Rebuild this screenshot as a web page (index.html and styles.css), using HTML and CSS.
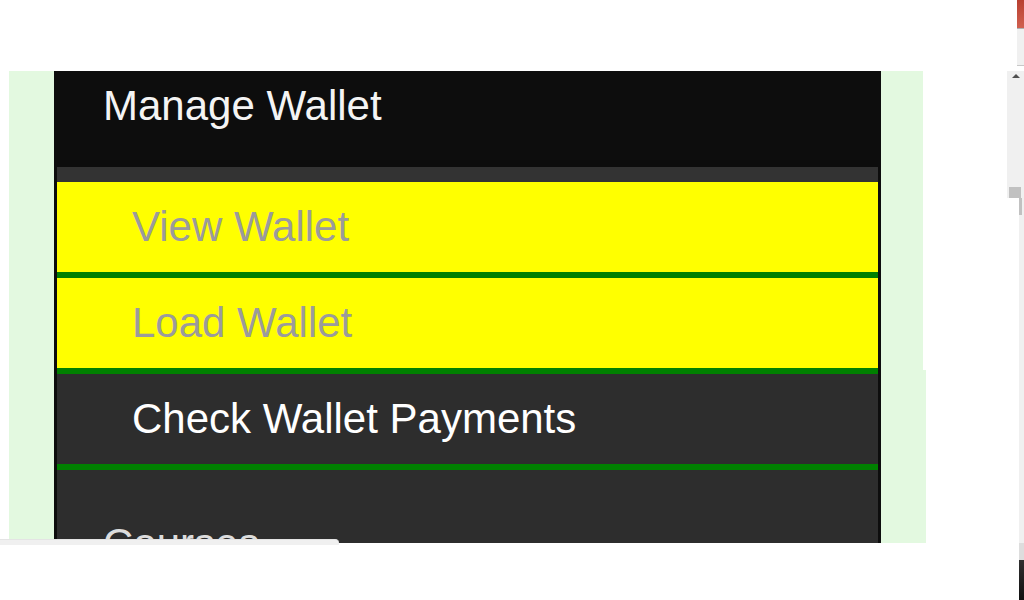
FILE: index.html
```html
<!DOCTYPE html>
<html>
<head>
<meta charset="utf-8">
<link rel="stylesheet" href="styles.css">
</head>
<body>
<div class="canvas">
  <div class="panel">
    <div class="header">Manage Wallet</div>
    <div class="strip"></div>
    <div class="item item-hl">View Wallet</div>
    <div class="item item-hl">Load Wallet</div>
    <div class="item item-dark">Check Wallet Payments</div>
    <div class="section">Courses</div>
  </div>
</div>
<div class="canvas-ext"></div>
<div class="statusbar"></div>
<div class="win-corner"></div>
<div class="win-bar"></div>
<div class="vscroll"><span class="arrow"></span><span class="thumb"></span></div>
<div class="vscroll-rest"><span class="thumb2"></span></div>
<div class="edge-bottom"></div>
</body>
</html>
```
FILE: styles.css
```css
html, body {
  margin: 0;
  padding: 0;
  background: #ffffff;
  width: 1024px;
  height: 600px;
  overflow: hidden;
  font-family: "Liberation Sans", Arial, sans-serif;
}
.canvas {
  margin: 71px 0 0 9px;
  width: 914px;
  height: 472px;
  background: #e3f9e0;
  overflow: hidden;
}
.canvas-ext {
  position: absolute;
  left: 923px;
  top: 370px;
  width: 3px;
  height: 173px;
  background: #e3f9e0;
}
.panel {
  margin-left: 45px;
  width: 821px;
  height: 472px;
  border-left: 3px solid #0d0d0d;
  border-right: 3px solid #0d0d0d;
  background: #2d2d2d;
  font-size: 42px;
}
.header {
  height: 84px;
  padding: 12px 0 0 46px;
  background: #0d0d0d;
  color: #f4f4f4;
  line-height: 1.117;
}
.strip {
  height: 15px;
  background: #333333;
}
.item {
  height: 90px;
  line-height: 90px;
  padding-left: 75px;
  border-bottom: 6px solid #008000;
}
.item-hl {
  background: #ffff00;
  color: #9b9b9b;
}
.item-dark {
  background: #2d2d2d;
  color: #ffffff;
}
.section {
  padding: 51px 0 0 46px;
  line-height: 1.117;
  color: #dcdcdc;
}
.statusbar {
  position: absolute;
  left: 0;
  top: 539px;
  width: 339px;
  height: 5px;
  background: #f0f0f0;
  border-top-right-radius: 4px;
  border-top: 1px solid #e4e4e4;
}
.win-corner {
  position: absolute;
  left: 1017px;
  top: 0;
  width: 7px;
  height: 28px;
  background: linear-gradient(#b84030, #d06050);
  border-bottom: 1px solid #b0b0b0;
}
.win-bar {
  position: absolute;
  left: 1017px;
  top: 29px;
  width: 7px;
  height: 36px;
  background: #f0f0f0;
  border-bottom: 1px solid #c8c8c8;
}
.vscroll {
  position: absolute;
  left: 1007px;
  top: 71px;
  width: 17px;
  height: 127px;
  background: #f0f0f0;
}
.arrow {
  position: absolute;
  left: 5px;
  top: 3px;
  width: 0;
  height: 0;
  border-left: 4px solid transparent;
  border-right: 4px solid transparent;
  border-bottom: 4px solid #505050;
}
.thumb {
  position: absolute;
  left: 2px;
  top: 116px;
  width: 12px;
  height: 11px;
  background: #c1c1c1;
}
.vscroll-rest {
  position: absolute;
  left: 1019px;
  top: 198px;
  width: 5px;
  height: 345px;
  background: #f0f0f0;
}
.thumb2 {
  position: absolute;
  left: 0;
  top: 0;
  width: 3px;
  height: 17px;
  background: #c1c1c1;
}
.edge-bottom {
  position: absolute;
  left: 1019px;
  top: 543px;
  width: 5px;
  height: 57px;
  background: linear-gradient(#dddddd 0, #dddddd 17px, #303030 17px, #101010 100%);
}
```
